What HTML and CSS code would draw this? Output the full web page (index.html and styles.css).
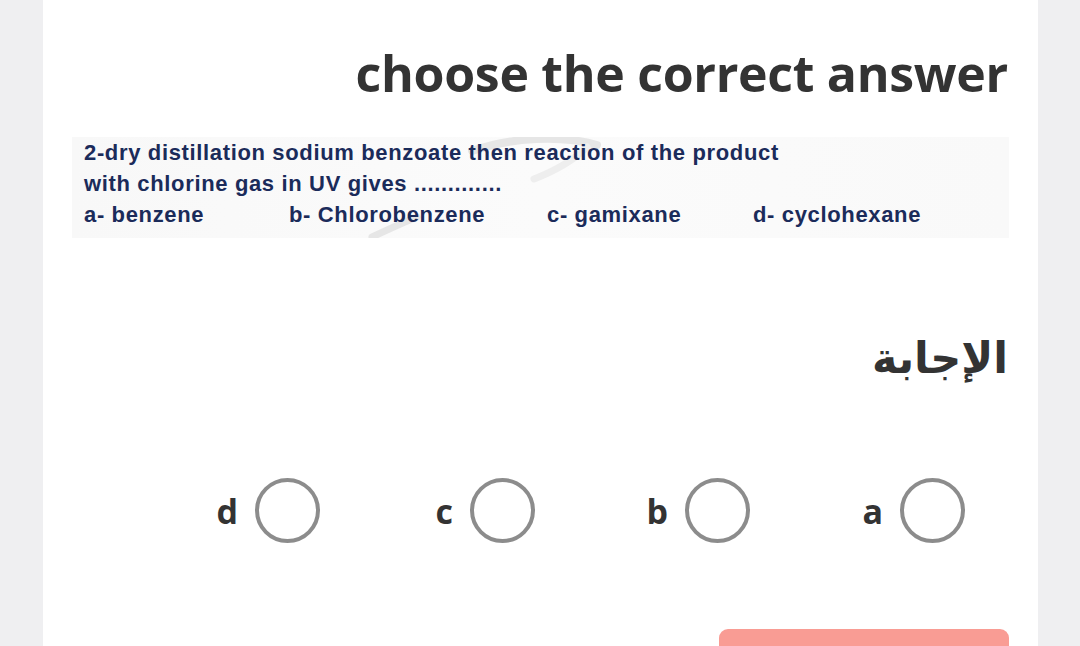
FILE: index.html
```html
<!DOCTYPE html>
<html lang="en">
<head>
<meta charset="utf-8">
<title>Question</title>
<link rel="stylesheet" href="styles.css">
</head>
<body>
<div class="page">
  <main class="card">
    <h1 class="title">choose the correct answer</h1>
    <div class="question-img">
      <svg class="watermark" width="938" height="101" viewBox="0 0 938 101" aria-hidden="true">
        <path d="M400 14 C 440 0, 490 -2, 525 8" fill="none" stroke="#e6e6e6" stroke-width="8" stroke-linecap="round"/>
        <path d="M515 10 C 500 25, 480 35, 462 42" fill="none" stroke="#eeeeee" stroke-width="7" stroke-linecap="round"/>
        <path d="M300 100 C 315 93, 330 86, 345 80" fill="none" stroke="#e6e6e6" stroke-width="7" stroke-linecap="round"/>
      </svg>
      <p class="q-line">2-dry distillation sodium benzoate then reaction of the product</p>
      <p class="q-line">with chlorine gas in UV gives .............</p>
      <div class="q-options">
        <span class="opt opt-a">a- benzene</span>
        <span class="opt opt-b">b- Chlorobenzene</span>
        <span class="opt opt-c">c- gamixane</span>
        <span class="opt opt-d">d- cyclohexane</span>
      </div>
    </div>
    <h2 class="answer-label" dir="rtl">الإجابة</h2>
    <div class="choices">
      <label class="choice"><span class="letter">a</span><span class="radio"></span></label>
      <label class="choice"><span class="letter">b</span><span class="radio"></span></label>
      <label class="choice"><span class="letter">c</span><span class="radio"></span></label>
      <label class="choice"><span class="letter">d</span><span class="radio"></span></label>
    </div>
    <div class="actions">
      <button class="submit" type="button"></button>
    </div>
  </main>
</div>
</body>
</html>
```

FILE: styles.css
```css
* { box-sizing: border-box; }
html, body { margin: 0; padding: 0; }
body {
  width: 1080px;
  height: 646px;
  overflow: hidden;
  background: #efeff1;
  font-family: "Open Sans", "DejaVu Sans", sans-serif;
}
.page {
  padding-left: 43px;
  width: 1038px;
}
.card {
  background: #ffffff;
  width: 995px;
  height: 646px;
  overflow: hidden;
  padding: 38px 29px 0 29px;
}
.title {
  margin: 0 1px 0 0;
  text-align: right;
  font-size: 50px;
  font-weight: 700;
  color: #333333;
  line-height: 70px;
  letter-spacing: -0.3px;
}
.question-img {
  position: relative;
  margin-top: 29px;
  height: 101px;
  background: linear-gradient(90deg, #f8f8f8, #fbfbfb 50%, #f9f9f9);
  padding: 0 0 0 12px;
  font-family: "Liberation Sans", Arial, sans-serif;
  font-weight: 700;
  font-size: 22px;
  color: #1b2b5a;
}
.watermark {
  position: absolute;
  left: 0;
  top: 0;
}
.q-line {
  position: relative;
  margin: 0;
  line-height: 31px;
  white-space: nowrap;
  letter-spacing: 0.65px;
}
.q-options {
  position: relative;
  display: flex;
  line-height: 31px;
  letter-spacing: 0.65px;
  white-space: nowrap;
}
.opt-a { width: 205px; }
.opt-b { width: 258px; }
.opt-c { width: 206px; }
.answer-label {
  margin: 89px 1px 0 0;
  text-align: right;
  font-size: 43px;
  font-weight: 700;
  color: #333333;
  line-height: 60px;
}
.choices {
  display: flex;
  flex-direction: row-reverse;
  margin-top: 91px;
  padding-right: 44px;
}
.choice {
  width: 215px;
  display: flex;
  justify-content: flex-end;
  align-items: center;
  gap: 17px;
}
.letter {
  font-size: 34px;
  font-weight: 700;
  color: #333333;
  line-height: 40px;
}
.radio {
  width: 65px;
  height: 65px;
  border: 4px solid #8c8c8c;
  border-radius: 50%;
  background: #ffffff;
}
.actions {
  display: flex;
  justify-content: flex-end;
  margin-top: 86px;
}
.submit {
  width: 290px;
  height: 50px;
  border: none;
  border-radius: 9px;
  background: #f99c94;
}
```
